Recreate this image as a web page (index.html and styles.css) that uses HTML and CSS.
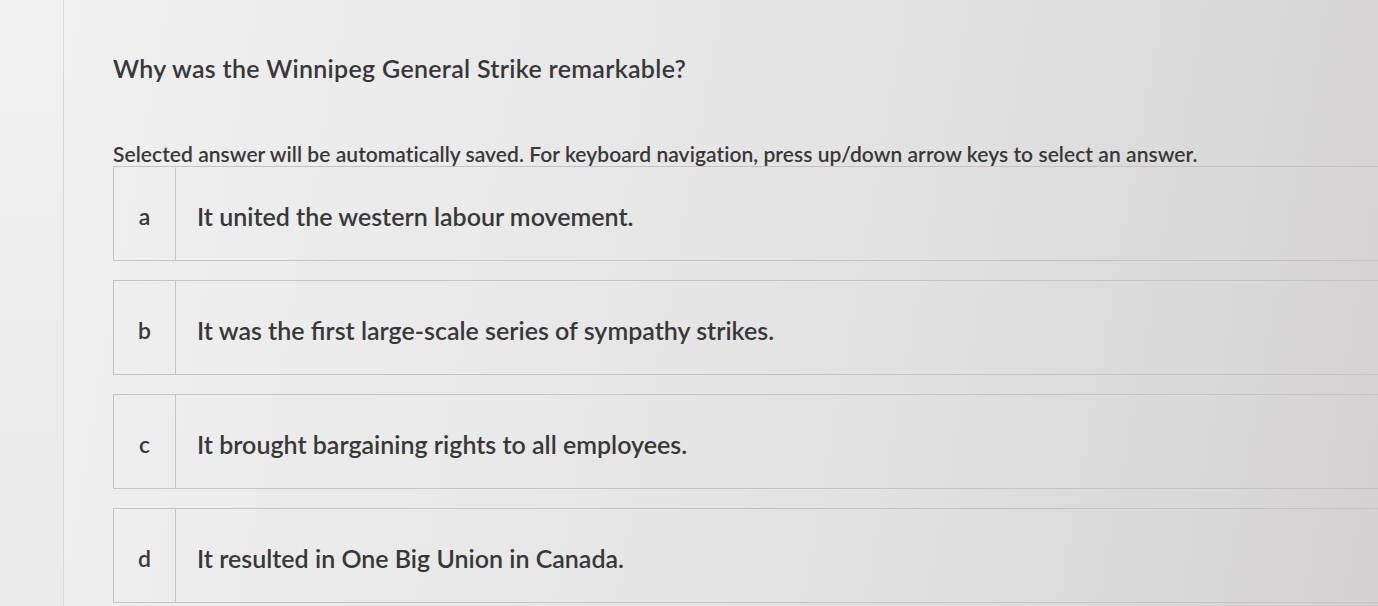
FILE: index.html
```html
<!DOCTYPE html>
<html lang="en">
<head>
<meta charset="utf-8">
<title>Question</title>
<link rel="stylesheet" href="styles.css">
</head>
<body>
<div class="page">
  <aside class="side"></aside>
  <main class="content">
    <h1 class="question">Why was the Winnipeg General Strike remarkable?</h1>
    <p class="hint">Selected answer will be automatically saved. For keyboard navigation, press up/down arrow keys to select an answer.</p>
    <ul class="options">
      <li class="option"><span class="letter">a</span><span class="text">It united the western labour movement.</span></li>
      <li class="option"><span class="letter">b</span><span class="text">It was the first large-scale series of sympathy strikes.</span></li>
      <li class="option"><span class="letter">c</span><span class="text">It brought bargaining rights to all employees.</span></li>
      <li class="option"><span class="letter">d</span><span class="text">It resulted in One Big Union in Canada.</span></li>
    </ul>
  </main>
</div>
</body>
</html>
```

FILE: styles.css
```css
* { box-sizing: border-box; }
html, body { margin: 0; height: 100%; }
body {
  font-family: "Lato", "Open Sans", sans-serif;
  color: #383838;
  background: #e6e6e6;
  overflow: hidden;
}
.page {
  display: flex;
  height: 606px;
  width: 1378px;
}
.side {
  width: 64px;
  flex: none;
  background: linear-gradient(to bottom, #f1f1f1, #eaeaea);
  border-right: 1px solid #d9d9d9;
}
.content {
  flex: 1;
  padding: 52px 0 0 49px;
  background: linear-gradient(100deg, #f0f0f0 0%, #e9e9e9 35%, #e0dfdf 70%, #d3d1d1 100%);
}
.question {
  margin: 0;
  font-size: 25px;
  font-weight: 600;
  line-height: 32px;
  letter-spacing: 0.3px;
}
.hint {
  margin: 61px 0 0;
  font-size: 21px;
  font-weight: 600;
  line-height: 18px;
  letter-spacing: 0.05px;
}
.options {
  list-style: none;
  margin: 3px 0 0;
  padding: 0;
  display: flex;
  flex-direction: column;
  gap: 19px;
}
.option {
  display: flex;
  height: 95px;
  border: 1.5px solid #c4c4c4;
  border-right: none;
  margin-right: -2px;
}
.letter {
  width: 62px;
  flex: none;
  display: flex;
  align-items: center;
  justify-content: center;
  border-right: 1.5px solid #c4c4c4;
  font-size: 23px;
  font-weight: 600;
  padding-top: 4px;
}
.text {
  display: flex;
  align-items: center;
  padding-left: 21px;
  padding-top: 4px;
  font-size: 25px;
  font-weight: 600;
  letter-spacing: 0;
}
```
